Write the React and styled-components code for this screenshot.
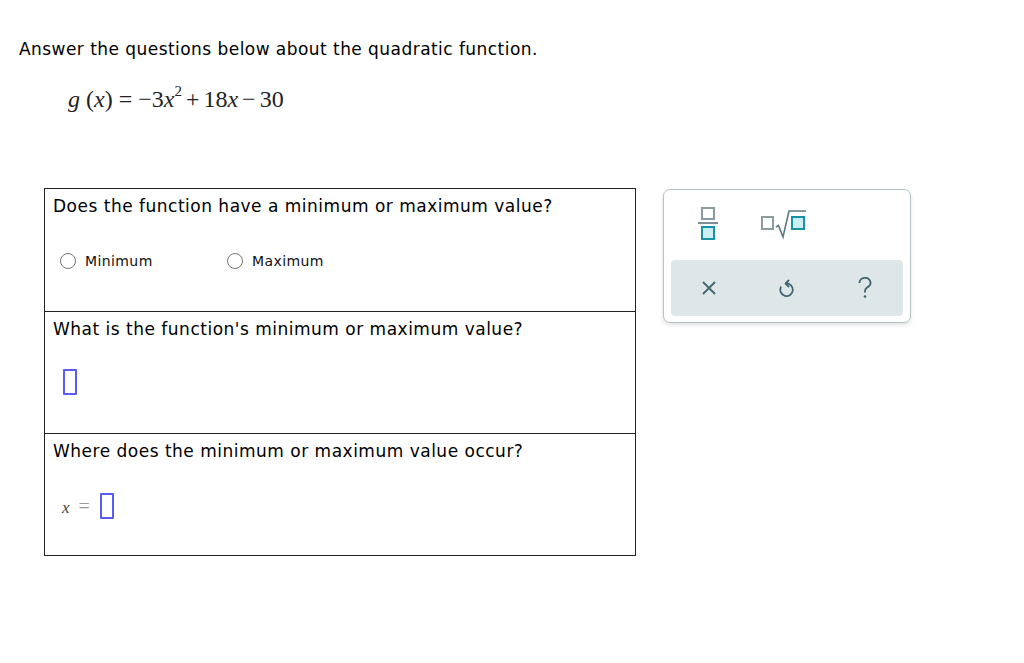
import React from 'react';
import styled, { createGlobalStyle } from 'styled-components';

const GlobalStyle = createGlobalStyle`
  html, body {
    margin: 0;
    padding: 0;
    background: #ffffff;
  }
  body {
    font-family: 'DejaVu Sans', Verdana, sans-serif;
    color: #000000;
  }
`;

const Page = styled.div`
  padding: 37px 0 0 19px;
`;

const Intro = styled.div`
  font-size: 17px;
  letter-spacing: 0.45px;
  line-height: 24px;
`;

const Equation = styled.div`
  margin: 22px 0 0 49px;
  font-family: 'Liberation Serif', 'Times New Roman', serif;
  font-size: 24px;
  line-height: 32px;
  color: #222;
`;

const V = styled.i`
  font-style: italic;
`;

const Sup = styled.sup`
  font-size: 15px;
  vertical-align: 0;
  position: relative;
  top: -11px;
  margin-left: 0;
`;

const Op = styled.span`
  margin: 0 ${p => p.gap || 4}px;
`;

const Main = styled.div`
  display: flex;
  align-items: flex-start;
  gap: 27px;
  margin: 70px 0 0 25px;
`;

const Table = styled.div`
  width: 590px;
  border: 1px solid #222;
  display: flex;
  flex-direction: column;
`;

const Row = styled.div`
  height: 122px;
  box-sizing: border-box;
  padding: 5px 8px;
  border-top: ${p => (p.first ? 'none' : '1px solid #222')};
  display: flex;
  flex-direction: column;
`;

const Question = styled.div`
  font-size: 17px;
  letter-spacing: 0.5px;
  line-height: 24px;
`;

const Options = styled.div`
  display: flex;
  margin: 35px 0 0 7px;
`;

const Option = styled.label`
  display: flex;
  align-items: center;
  gap: 9px;
  width: 167px;
  font-size: 14px;
  letter-spacing: 0.4px;
  color: #111;
`;

const Radio = styled.span`
  width: 16px;
  height: 16px;
  border: 1px solid #777;
  border-radius: 50%;
  box-sizing: border-box;
`;

const AnswerBox = styled.span`
  display: inline-block;
  width: 14px;
  height: 26px;
  flex-shrink: 0;
  box-sizing: border-box;
  border: 2px solid #5a5af5;
  border-radius: 1px;
`;

const AnswerLine = styled.div`
  display: flex;
  align-items: center;
  margin: ${p => p.m};
`;

const XEq = styled.span`
  font-family: 'Liberation Serif', 'Times New Roman', serif;
  font-size: 17px;
  color: #444;
  margin-right: 10px;
  i {
    font-style: italic;
  }
  span {
    font-size: 20px;
    color: #999;
    margin-left: 9px;
  }
`;

const Palette = styled.div`
  width: 248px;
  margin-top: 1px;
  box-sizing: border-box;
  border: 1px solid #b6c2c6;
  border-radius: 7px;
  box-shadow: 0 2px 4px rgba(0, 0, 0, 0.12);
  padding: 7px 7px 6px 7px;
  background: #fff;
`;

const TopRow = styled.div`
  display: flex;
  align-items: center;
  height: 53px;
  padding: 0 0 10px 26px;
  gap: 42px;
`;

const Bar = styled.div`
  height: 56px;
  background: #dfe6e8;
  border-radius: 4px;
  display: flex;
  align-items: center;
  justify-content: center;
  gap: 48px;
`;

const IconBtn = styled.span`
  display: flex;
  align-items: center;
  justify-content: center;
  width: 30px;
  height: 30px;
`;

const FracIcon = () => (
  <svg width="22" height="36" viewBox="0 0 22 36">
    <rect x="5" y="2" width="12" height="11" fill="none" stroke="#8a9ba1" strokeWidth="2" />
    <rect x="1" y="16" width="20" height="2" fill="#7d8f95" />
    <rect x="5" y="21" width="12" height="12" fill="#cdeef3" stroke="#1594a7" strokeWidth="2" />
  </svg>
);

const SqrtIcon = () => (
  <svg width="46" height="32" viewBox="0 0 46 32">
    <rect x="1" y="9" width="11" height="12" fill="none" stroke="#8a9ba1" strokeWidth="2" />
    <path d="M15 19 L17.5 17.5 L22 29 L28 3 L45 3" fill="none" stroke="#5c7a83" strokeWidth="1.6" />
    <rect x="31" y="9" width="12" height="12" fill="#cdeef3" stroke="#1594a7" strokeWidth="2" />
  </svg>
);

const CloseIcon = () => (
  <svg width="16" height="16" viewBox="0 0 16 16">
    <path d="M2 2 L14 14 M14 2 L2 14" stroke="#3f6670" strokeWidth="1.8" />
  </svg>
);

const UndoIcon = () => (
  <svg width="18" height="20" viewBox="0 0 18 20">
    <path d="M8 5.5 A6.3 6.3 0 1 1 2.8 9.2" fill="none" stroke="#3f6670" strokeWidth="1.8" strokeLinecap="round" />
    <path d="M10.5 2.5 L7.6 5.5 L10.5 8.5" fill="none" stroke="#3f6670" strokeWidth="1.8" strokeLinecap="round" strokeLinejoin="round" />
  </svg>
);

const HelpIcon = () => (
  <svg width="16" height="22" viewBox="0 0 16 22">
    <path d="M2.5 6 A5.5 5 0 1 1 10 10.5 Q8 11.8 8 14.5 L8 15.5" fill="none" stroke="#3f6670" strokeWidth="1.9" />
    <circle cx="8" cy="19.5" r="1.3" fill="#3f6670" />
  </svg>
);

export default function App() {
  return (
    <>
      <GlobalStyle />
      <Page>
        <Intro>Answer the questions below about the quadratic function.</Intro>
        <Equation>
          <V>g</V>
          <span> (</span>
          <V>x</V>
          <span>)</span>
          <Op gap={6}>=</Op>
          <span>−3</span>
          <V>x</V>
          <Sup>2</Sup>
          <Op>+</Op>
          <span>18</span>
          <V>x</V>
          <Op>−</Op>
          <span>30</span>
        </Equation>
        <Main>
          <Table>
            <Row first>
              <Question>Does the function have a minimum or maximum value?</Question>
              <Options>
                <Option>
                  <Radio />
                  Minimum
                </Option>
                <Option>
                  <Radio />
                  Maximum
                </Option>
              </Options>
            </Row>
            <Row>
              <Question>What is the function's minimum or maximum value?</Question>
              <AnswerLine m="28px 0 0 10px">
                <AnswerBox />
              </AnswerLine>
            </Row>
            <Row>
              <Question>Where does the minimum or maximum value occur?</Question>
              <AnswerLine m="30px 0 0 9px">
                <XEq>
                  <i>x</i>
                  <span>=</span>
                </XEq>
                <AnswerBox />
              </AnswerLine>
            </Row>
          </Table>
          <Palette>
            <TopRow>
              <FracIcon />
              <SqrtIcon />
            </TopRow>
            <Bar>
              <IconBtn><CloseIcon /></IconBtn>
              <IconBtn><UndoIcon /></IconBtn>
              <IconBtn><HelpIcon /></IconBtn>
            </Bar>
          </Palette>
        </Main>
      </Page>
    </>
  );
}
